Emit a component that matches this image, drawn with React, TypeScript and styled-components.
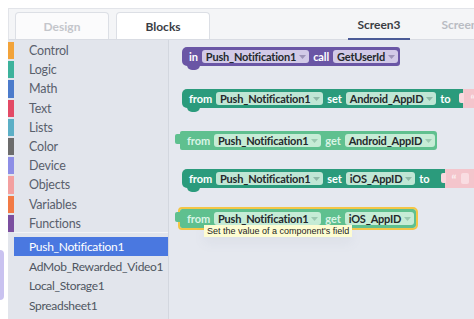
import styled, { createGlobalStyle } from 'styled-components'

const GlobalStyle = createGlobalStyle`
  html, body { margin: 0; padding: 0; background: #fff; overflow: hidden; }
  body { font-family: Lato, "Noto Sans", sans-serif; }
  * { box-sizing: border-box; }
`

const Frame = styled.div`
  margin: 8px 0 0 8px;
  width: 466px;
  height: 311px;
  display: flex;
  flex-direction: column;
  overflow: hidden;
`

const Header = styled.div`
  height: 32px;
  flex: none;
  display: flex;
  align-items: flex-end;
  background: #f4f5f7;
  border-top: 1px solid #e2e4e9;
  border-left: 1px solid #e2e4e9;
  border-bottom: 1px solid #d9dce3;
  padding-left: 6px;
`

const EditorTabs = styled.div`
  display: flex;
  gap: 7px;
`

const EditorTab = styled.div<{ $active?: boolean }>`
  width: 94px;
  height: 27px;
  display: flex;
  align-items: center;
  justify-content: center;
  background: ${(p) => (p.$active ? '#ffffff' : '#fbfbfc')};
  border: 1px solid #dcdfe5;
  border-bottom: none;
  border-radius: 4px 4px 0 0;
  font-size: 12px;
  font-weight: 700;
  color: ${(p) => (p.$active ? '#3a3d44' : '#c4c6cb')};
`

const ScreenTabs = styled.div`
  display: flex;
  gap: 22px;
  margin-left: 138px;
  align-self: stretch;
  align-items: stretch;
`

const ScreenTab = styled.div<{ $active?: boolean }>`
  width: 62px;
  display: flex;
  align-items: center;
  justify-content: center;
  padding-top: 2px;
  font-size: 12px;
  font-weight: 700;
  white-space: nowrap;
  color: ${(p) => (p.$active ? '#3a3d44' : '#b9bcc3')};
  border-bottom: 2px solid ${(p) => (p.$active ? '#4b5b96' : 'transparent')};
  margin-bottom: -1px;
`

const Main = styled.div`
  flex: 1;
  display: flex;
  min-height: 0;
`

const Sidebar = styled.div`
  width: 161px;
  flex: none;
  background: #e2e5ec;
  border-right: 1px solid #d3d7df;
  padding-top: 1px;
`

const Category = styled.div<{ $color: string }>`
  position: relative;
  height: 19.2px;
  display: flex;
  align-items: center;
  padding-left: 21px;
  font-size: 12.5px;
  letter-spacing: -0.2px;
  color: #59606c;
  &::before {
    content: '';
    position: absolute;
    left: 0;
    top: 1px;
    bottom: 1px;
    width: 6px;
    background: ${(p) => p.$color};
  }
`

const Divider = styled.div`
  height: 1px;
  margin: -1px 0 4px 6px;
  background: #f2f3f6;
`

const ComponentRow = styled.div<{ $selected?: boolean }>`
  margin-left: 6px;
  height: 19.5px;
  display: flex;
  align-items: center;
  padding-left: 15px;
  font-size: 12px;
  letter-spacing: -0.3px;
  white-space: nowrap;
  color: ${(p) => (p.$selected ? '#ffffff' : '#4f5661')};
  background: ${(p) => (p.$selected ? '#4a78e0' : 'transparent')};
`

const Workspace = styled.div`
  flex: 1;
  position: relative;
  background: #e5e8ef;
  overflow: hidden;
`

type Shape = 'statement' | 'value'

const Block = styled.div<{ $bg: string; $x: number; $y: number; $shape: Shape; $selected?: boolean }>`
  position: absolute;
  left: ${(p) => p.$x}px;
  top: ${(p) => p.$y}px;
  height: 19px;
  display: flex;
  align-items: center;
  gap: 4px;
  padding: 0 2px 0 7px;
  background: ${(p) => p.$bg};
  border-radius: ${(p) => (p.$shape === 'statement' ? '5px 3px 3px 5px' : '2px 3px 3px 2px')};
  white-space: nowrap;
  outline: ${(p) => (p.$selected ? '2px solid #f3c646' : 'none')};
  &::before {
    content: '';
    display: ${(p) => (p.$shape === 'value' ? 'block' : 'none')};
    position: absolute;
    left: -5px;
    top: 3px;
    width: 6px;
    height: 10px;
    border-radius: 2px 0 0 2px;
    background: ${(p) => p.$bg};
  }
  &::after {
    content: '';
    display: ${(p) => (p.$shape === 'statement' ? 'block' : 'none')};
    position: absolute;
    left: 5px;
    bottom: -4px;
    width: 13px;
    height: 5px;
    border-radius: 0 0 5px 5px;
    background: ${(p) => p.$bg};
  }
`

const Label = styled.span<{ $color?: string }>`
  font-size: 11px;
  font-weight: 700;
  letter-spacing: -0.1px;
  color: ${(p) => p.$color || '#ffffff'};
`

const Field = styled.span<{ $bg: string }>`
  height: 13px;
  display: inline-flex;
  align-items: center;
  gap: 3px;
  padding: 0 3px 0 4px;
  border-radius: 3px;
  background: ${(p) => p.$bg};
  font-size: 11px;
  font-weight: 700;
  letter-spacing: -0.2px;
  color: #24292c;
`

const Socket = styled.div<{ $gap: number }>`
  position: relative;
  align-self: stretch;
  width: 60px;
  margin-left: ${(p) => p.$gap}px;
  margin-right: -2px;
  display: flex;
  align-items: center;
  gap: 4px;
  padding-left: 7px;
  background: #f4c5cc;
  &::before {
    content: '';
    position: absolute;
    left: -4px;
    top: 4px;
    width: 5px;
    height: 10px;
    border-radius: 2px 0 0 2px;
    background: #f8d9de;
  }
`

const Quote = styled.span`
  font-size: 13px;
  font-weight: 700;
  color: #fbeef0;
  line-height: 1;
  padding-top: 4px;
`

const TextBox = styled.span`
  width: 8px;
  height: 11px;
  border-radius: 2px;
  background: #f9dde2;
`

const Tooltip = styled.div`
  position: absolute;
  left: 35px;
  top: 185px;
  padding: 1px 3px;
  background: #fdfcd2;
  font-family: 'Liberation Sans', Arial, sans-serif;
  font-size: 9px;
  color: #1e1e1e;
  white-space: nowrap;
  box-shadow: 0 6px 12px rgba(120, 130, 150, 0.08);
`

const SideNub = styled.div`
  position: fixed;
  left: -4px;
  top: 250px;
  width: 8px;
  height: 50px;
  border-radius: 4px;
  background: #c9c2f0;
`

const Arrow = ({ color }: { color: string }) => (
  <svg width="7" height="4" viewBox="0 0 7 4">
    <path d="M0 0 L7 0 L3.5 4 Z" fill={color} />
  </svg>
)

const categories = [
  ['Control', '#f2a33a'],
  ['Logic', '#3db29c'],
  ['Math', '#4c7bcb'],
  ['Text', '#e34a66'],
  ['Lists', '#5cafc6'],
  ['Color', '#6c6c6c'],
  ['Device', '#8d8ee6'],
  ['Objects', '#f3a0a0'],
  ['Variables', '#f27a45'],
  ['Functions', '#7b4f9f'],
]

const components = ['Push_Notification1', 'AdMob_Rewarded_Video1', 'Local_Storage1', 'Spreadsheet1']

const PURPLE = '#6a56a5'
const PURPLE_FIELD = '#d2cae7'
const TEAL = '#2b9b7c'
const TEAL_FIELD = '#c0e6d5'
const MINT = '#5fc08f'
const MINT_FIELD = '#c6ecd6'
const MINT_LABEL = '#d9f4e5'

export default function App() {
  return (
    <Frame>
      <GlobalStyle />
      <SideNub />
      <Header>
        <EditorTabs>
          <EditorTab>Design</EditorTab>
          <EditorTab $active>Blocks</EditorTab>
        </EditorTabs>
        <ScreenTabs>
          <ScreenTab $active>Screen3</ScreenTab>
          <ScreenTab>Screen4</ScreenTab>
        </ScreenTabs>
      </Header>
      <Main>
        <Sidebar>
          {categories.map(([name, color]) => (
            <Category key={name} $color={color}>
              {name}
            </Category>
          ))}
          <Divider />
          {components.map((name, i) => (
            <ComponentRow key={name} $selected={i === 0}>
              {name}
            </ComponentRow>
          ))}
        </Sidebar>
        <Workspace>
          <Block $bg={PURPLE} $x={13} $y={7} $shape="statement">
            <Label>in</Label>
            <Field $bg={PURPLE_FIELD}>
              Push_Notification1 <Arrow color="#9d94b8" />
            </Field>
            <Label>call</Label>
            <Field $bg={PURPLE_FIELD}>
              GetUserId <Arrow color="#9d94b8" />
            </Field>
          </Block>

          <Block $bg={TEAL} $x={13} $y={49} $shape="statement">
            <Label>from</Label>
            <Field $bg={TEAL_FIELD}>
              Push_Notification1 <Arrow color="#8fb9a8" />
            </Field>
            <Label>set</Label>
            <Field $bg={TEAL_FIELD}>
              Android_AppID <Arrow color="#8fb9a8" />
            </Field>
            <Label>to</Label>
            <Socket $gap={9}>
              <Quote>“</Quote>
            </Socket>
          </Block>

          <Block $bg={MINT} $x={11} $y={91} $shape="value">
            <Label $color={MINT_LABEL}>from</Label>
            <Field $bg={MINT_FIELD}>
              Push_Notification1 <Arrow color="#9ccab2" />
            </Field>
            <Label $color={MINT_LABEL}>get</Label>
            <Field $bg={MINT_FIELD}>
              Android_AppID <Arrow color="#9ccab2" />
            </Field>
          </Block>

          <Block $bg={TEAL} $x={13} $y={129} $shape="statement">
            <Label>from</Label>
            <Field $bg={TEAL_FIELD}>
              Push_Notification1 <Arrow color="#8fb9a8" />
            </Field>
            <Label>set</Label>
            <Field $bg={TEAL_FIELD}>
              iOS_AppID <Arrow color="#8fb9a8" />
            </Field>
            <Label>to</Label>
            <Socket $gap={11}>
              <Quote>“</Quote>
              <TextBox />
            </Socket>
          </Block>

          <Block $bg={MINT} $x={11} $y={169} $shape="value" $selected>
            <Label $color={MINT_LABEL}>from</Label>
            <Field $bg={MINT_FIELD}>
              Push_Notification1 <Arrow color="#9ccab2" />
            </Field>
            <Label $color={MINT_LABEL}>get</Label>
            <Field $bg={MINT_FIELD}>
              iOS_AppID <Arrow color="#9ccab2" />
            </Field>
          </Block>

          <Tooltip>Set the value of a component's field</Tooltip>
        </Workspace>
      </Main>
    </Frame>
  )
}
